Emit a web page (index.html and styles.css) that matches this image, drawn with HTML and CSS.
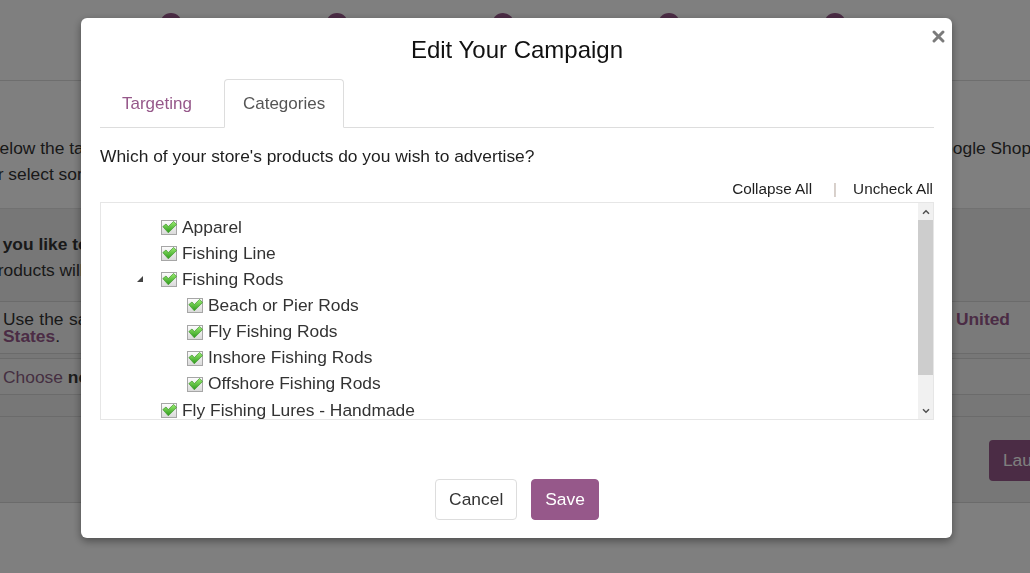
FILE: index.html
```html
<!DOCTYPE html>
<html lang="en">
<head>
    <meta charset="UTF-8">
    <meta name="viewport" content="width=device-width, initial-scale=1.0">
    <title>Edit Your Campaign</title>
    <link rel="stylesheet" href="styles.css">
</head>
<body>

    <!-- shared icon for the tree checkboxes -->
    <svg class="defs" aria-hidden="true">
        <defs>
            <linearGradient id="cb-box" x1="0" y1="0" x2="0" y2="1">
                <stop offset="0" stop-color="#fdfdfd"/>
                <stop offset="1" stop-color="#d9d9d9"/>
            </linearGradient>
            <linearGradient id="cb-green" x1="0" y1="0" x2="0" y2="1">
                <stop offset="0" stop-color="#9aec70"/>
                <stop offset="1" stop-color="#2c9a1b"/>
            </linearGradient>
        </defs>
        <symbol id="tick" viewBox="0 0 16 16">
            <rect x="0.5" y="1.5" width="15" height="14" fill="url(#cb-box)" stroke="#a6a6a6"/>
            <path d="M1.8 7.6 L5 5 L7.3 7.6 L12.6 2.4 L15.6 5.5 L7.3 13.8 Z" fill="url(#cb-green)" stroke="#3f952c" stroke-width=".7" stroke-linejoin="round"/>
        </symbol>
    </svg>

    <div class="page">
        <div class="steps">
            <span class="step"><i></i></span>
            <span class="step"><i></i></span>
            <span class="step"><i></i></span>
            <span class="step"><i></i></span>
            <span class="step"><i></i></span>
        </div>

        <div class="intro">
            <div class="intro-line">
                <span>Below the targeting options you chose earlier are shown, so</span>
                <span>your products appear on Google Shopping</span>
            </div>
            <div class="intro-line">
                <span>or select some of the options below to change them.</span>
            </div>
        </div>

        <div class="setup">
            <h3 class="setup-title">Would you like to use the same targeting as your other campaigns?</h3>
            <p class="setup-note">products will be advertised with the options you choose here.</p>
            <div class="option">Use the same targeting options for this campaign as the ones that are already being used for your existing products in the <b>United States</b>.</div>
            <div class="option option-alt">Choose <b>new</b> targeting options for this campaign</div>
            <div class="launch-row">
                <button class="launch-btn">Launch</button>
            </div>
        </div>
    </div>

    <!-- Edit campaign dialog -->
    <div class="overlay">
        <div class="modal">
            <button class="close" aria-label="Close">
                <svg viewBox="0 0 14 14" width="13" height="13"><path d="M2.2 2.2 L11.8 11.8 M11.8 2.2 L2.2 11.8" stroke="#7b7b7b" stroke-width="3.2" stroke-linecap="round"/></svg>
            </button>
            <h2 class="modal-title">Edit Your Campaign</h2>

            <ul class="tabs">
                <li class="tab">Targeting</li>
                <li class="tab active">Categories</li>
            </ul>

            <p class="prompt">Which of your store's products do you wish to advertise?</p>

            <div class="tree-tools">
                <span>Collapse All</span>
                <span class="sep">|</span>
                <span>Uncheck All</span>
            </div>

            <div class="tree-box">
                <ul class="tree">
                    <li><div class="node"><span class="toggle"></span><svg class="cb"><use href="#tick"/></svg><span>Apparel</span></div></li>
                    <li><div class="node"><span class="toggle"></span><svg class="cb"><use href="#tick"/></svg><span>Fishing Line</span></div></li>
                    <li>
                        <div class="node"><svg class="toggle" viewBox="0 0 16 16"><path d="M10 5 L10 11 L4 11 Z" fill="#444"/></svg><svg class="cb"><use href="#tick"/></svg><span>Fishing Rods</span></div>
                        <ul>
                            <li><div class="node"><span class="toggle"></span><svg class="cb"><use href="#tick"/></svg><span>Beach or Pier Rods</span></div></li>
                            <li><div class="node"><span class="toggle"></span><svg class="cb"><use href="#tick"/></svg><span>Fly Fishing Rods</span></div></li>
                            <li><div class="node"><span class="toggle"></span><svg class="cb"><use href="#tick"/></svg><span>Inshore Fishing Rods</span></div></li>
                            <li><div class="node"><span class="toggle"></span><svg class="cb"><use href="#tick"/></svg><span>Offshore Fishing Rods</span></div></li>
                        </ul>
                    </li>
                    <li><div class="node"><span class="toggle"></span><svg class="cb"><use href="#tick"/></svg><span>Fly Fishing Lures - Handmade</span></div></li>
                    <li><div class="node"><span class="toggle"></span><svg class="cb"><use href="#tick"/></svg><span>Hooks &amp; Terminal Tackle</span></div></li>
                    <li><div class="node"><span class="toggle"></span><svg class="cb"><use href="#tick"/></svg><span>Reels</span></div></li>
                </ul>
                <div class="scrollbar">
                    <span class="sb-arrow"><svg viewBox="0 0 8 6" width="8" height="6"><path d="M1 4.8 L4 1.8 L7 4.8" fill="none" stroke="#505050" stroke-width="1.5"/></svg></span>
                    <span class="sb-thumb"></span>
                    <span class="sb-track"></span>
                    <span class="sb-arrow"><svg viewBox="0 0 8 6" width="8" height="6"><path d="M1 1.2 L4 4.2 L7 1.2" fill="none" stroke="#505050" stroke-width="1.5"/></svg></span>
                </div>
            </div>

            <div class="modal-footer">
                <button class="btn btn-cancel">Cancel</button>
                <button class="btn btn-save">Save</button>
            </div>
        </div>
    </div>

</body>
</html>
```

FILE: styles.css
```css
body {
    font-family: "Liberation Sans", Arial, sans-serif;
    margin: 0;
    width: 1030px;
    height: 573px;
    overflow: hidden;
    background-color: #fff;
    color: #333;
}
.defs {
    position: absolute;
    width: 0;
    height: 0;
}

/* page behind the dialog */
.page {
    margin-left: -12px;
    width: 1086px;
    font-size: 17.4px;
}
.steps {
    display: flex;
    height: 67px;
    padding: 13px 0 0 100px;
    border-bottom: 1px solid #dcdcdc;
}
.step {
    width: 166px;
    display: flex;
    justify-content: center;
}
.step i {
    width: 22px;
    height: 22px;
    border-radius: 50%;
    background-color: #96588a;
}
.intro {
    padding: 54px 10px 21px 0;
    line-height: 26px;
    border-bottom: 1px solid #e2e2e2;
}
.intro-line {
    display: flex;
    justify-content: space-between;
    white-space: nowrap;
}
.setup {
    background-color: #eee;
    padding-top: 22px;
    border-bottom: 1px solid #d6d6d6;
}
.setup-title {
    margin: 0 0 0 -43px;
    font-size: 17.4px;
    line-height: 26px;
    white-space: nowrap;
}
.setup-note {
    margin: 0 0 18px;
    line-height: 26px;
    white-space: nowrap;
}
.option {
    background-color: #f5f5f5;
    border-top: 1px solid #d6d6d6;
    border-bottom: 1px solid #d6d6d6;
    padding: 8.5px 64px 8px 15px;
    line-height: 17.4px;
    text-align: justify;
}
.option b {
    color: #96588a;
}
.option + .option {
    margin-top: 4px;
    padding-top: 9.5px;
}
.option-alt {
    color: #8a5f83;
}
.option-alt b {
    color: #3a3a3a;
}
.launch-row {
    display: flex;
    justify-content: flex-end;
    margin-top: 21px;
    padding: 23px 0 21px;
    border-top: 1px solid #d6d6d6;
}
.launch-btn {
    height: 41px;
    padding: 0 14px;
    font: inherit;
    color: #fff;
    background-color: #96588a;
    border: none;
    border-radius: 4px;
}

/* dialog */
.overlay {
    position: fixed;
    inset: 0;
    padding-top: 18px;
    background-color: rgba(0, 0, 0, 0.5);
}
.modal {
    position: relative;
    box-sizing: border-box;
    width: 871px;
    margin-left: 81px;
    padding: 19px 18px 18px 19px;
    background-color: #fff;
    border-radius: 6px;
    box-shadow: 0 3px 9px rgba(0, 0, 0, 0.4);
}
.close {
    position: absolute;
    top: 12px;
    right: 7px;
    width: 13px;
    height: 13px;
    padding: 0;
    border: none;
    background: none;
    line-height: 0;
    cursor: pointer;
}
.modal-title {
    margin: 0;
    text-align: center;
    font-size: 24px;
    font-weight: normal;
    line-height: 26px;
    color: #111;
}
.tabs {
    display: flex;
    height: 48px;
    margin: 16px 0 0;
    padding: 0 0 0 4px;
    list-style: none;
    border-bottom: 1px solid #ddd;
}
.tab {
    align-self: flex-start;
    padding: 1px 18px 0;
    margin-right: 14px;
    font-size: 17px;
    line-height: 47px;
    color: #96588a;
}
.tab.active {
    padding: 0 18px;
    line-height: 47px;
    color: #555;
    background-color: #fff;
    border: 1px solid #ddd;
    border-bottom-color: #fff;
    border-radius: 4px 4px 0 0;
}
.prompt {
    margin: 16px 0 0;
    font-size: 17.4px;
    line-height: 24px;
    color: #1e1e1e;
}
.tree-tools {
    display: flex;
    justify-content: flex-end;
    margin-top: 11px;
    padding-right: 1px;
    font-size: 15.3px;
    line-height: 20px;
    color: #1e1e1e;
}
.tree-tools .sep {
    margin: 0 16px 0 21px;
    color: #c4b8b0;
}
.tree-box {
    display: flex;
    box-sizing: border-box;
    height: 218px;
    margin-top: 3px;
    border: 1px solid #e6e6e6;
}
.tree {
    flex: 1;
    margin: 0;
    padding: 11px 0 0 32px;
    list-style: none;
    overflow: hidden;
    font-size: 17.4px;
    color: #333;
}
.tree ul {
    margin: 0;
    padding-left: 26px;
    list-style: none;
}
.node {
    display: flex;
    align-items: center;
    height: 26.15px;
    white-space: nowrap;
}
.toggle {
    flex: none;
    width: 16px;
    height: 16px;
    margin-right: 12px;
}
.cb {
    flex: none;
    width: 16px;
    height: 16px;
    margin-right: 5px;
}
.scrollbar {
    display: flex;
    flex-direction: column;
    width: 15px;
    background-color: #f1f1f1;
}
.sb-arrow {
    display: flex;
    align-items: center;
    justify-content: center;
    height: 17px;
}
.sb-thumb {
    height: 155px;
    background-color: #cdcdcd;
}
.sb-track {
    flex: 1;
}
.modal-footer {
    display: flex;
    justify-content: center;
    gap: 14px;
    margin-top: 59px;
}
.btn {
    height: 41px;
    padding: 0 13px;
    font-family: "Liberation Sans", Arial, sans-serif;
    font-size: 17.4px;
    border-radius: 4px;
    cursor: pointer;
}
.btn-cancel {
    color: #333;
    background-color: #fff;
    border: 1px solid #ddd;
}
.btn-save {
    color: #fff;
    background-color: #96588a;
    border: 1px solid #96588a;
}
```
